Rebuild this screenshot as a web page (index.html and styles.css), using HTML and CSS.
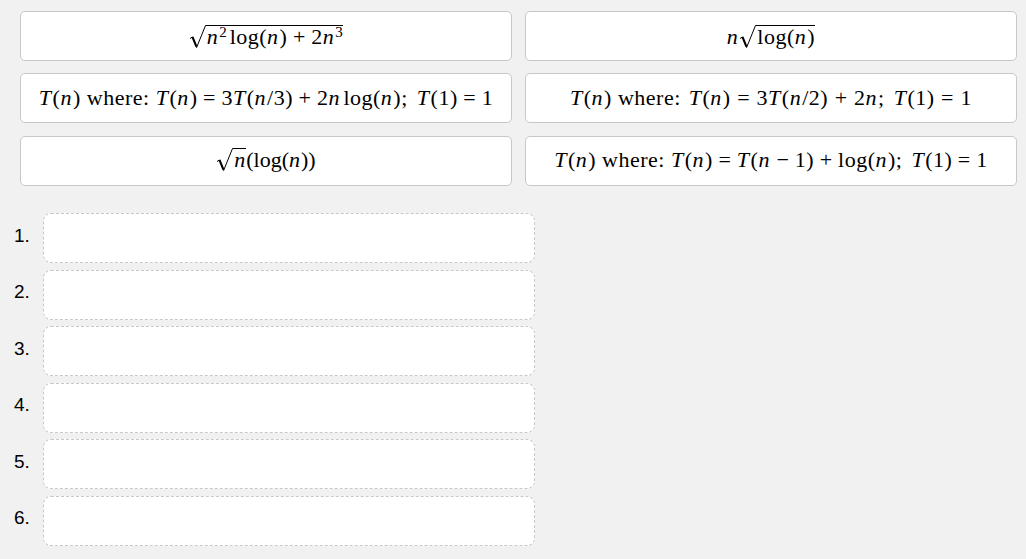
FILE: index.html
```html
<!DOCTYPE html>
<html lang="en">
    <head>
        <meta charset="utf-8">
        <title>Order the functions</title>
        <link rel="stylesheet" href="styles.css">
    </head>
    <body>
        <div class="cards">
            <div class="card first">
                <span class="math"><svg class="radical" width="18" height="24" viewBox="0 0 18 24"><path d="M1 13.5 L3.5 12 L7.6 22.5 L16.5 .5 L18 .5" fill="none" stroke="#000"/><path d="M3.5 12 L7.4 21.5" fill="none" stroke="#000" stroke-width="2"/></svg><span class="radicand"><i>n</i><sup>2</sup><span class="thin"></span>log(<i>n</i>)<span class="op">+</span>2<i>n</i><sup>3</sup></span></span>
            </div>
            <div class="card first">
                <span class="math"><i>n</i><svg class="radical" width="18" height="24" viewBox="0 0 18 24"><path d="M1 13.5 L3.5 12 L7.6 22.5 L16.5 .5 L18 .5" fill="none" stroke="#000"/><path d="M3.5 12 L7.4 21.5" fill="none" stroke="#000" stroke-width="2"/></svg><span class="radicand">log(<i>n</i>)</span></span>
            </div>
            <div class="card">
                <span class="math"><i>T</i>(<i>n</i>) where: <i>T</i>(<i>n</i>)<span class="op">=</span>3<i>T</i>(<i>n</i>/3)<span class="op">+</span>2<i>n</i><span class="thin"></span>log(<i>n</i>);<span class="semi"></span><i>T</i>(1)<span class="op">=</span>1</span>
            </div>
            <div class="card">
                <span class="math loose"><i>T</i>(<i>n</i>) where:<span class="semi wide"></span><i>T</i>(<i>n</i>)<span class="op">=</span>3<i>T</i>(<i>n</i>/2)<span class="op">+</span>2<i>n</i>;<span class="semi"></span><i>T</i>(1)<span class="op">=</span>1</span>
            </div>
            <div class="card">
                <span class="math tight"><svg class="radical" width="18" height="24" viewBox="0 0 18 24"><path d="M1 13.5 L3.5 12 L7.6 22.5 L16.5 .5 L18 .5" fill="none" stroke="#000"/><path d="M3.5 12 L7.4 21.5" fill="none" stroke="#000" stroke-width="2"/></svg><span class="radicand"><i>n</i></span>(log(<i>n</i>))</span>
            </div>
            <div class="card">
                <span class="math"><i>T</i>(<i>n</i>) where: <i>T</i>(<i>n</i>)<span class="op">=</span><i>T</i>(<i>n</i><span class="op">&minus;</span>1)<span class="op">+</span>log(<i>n</i>);<span class="semi"></span><i>T</i>(1)<span class="op">=</span>1</span>
            </div>
        </div>
        <ol class="slots">
            <li class="slot-row"><span class="num">1.</span><div class="slot"></div></li>
            <li class="slot-row"><span class="num">2.</span><div class="slot"></div></li>
            <li class="slot-row"><span class="num">3.</span><div class="slot"></div></li>
            <li class="slot-row"><span class="num">4.</span><div class="slot"></div></li>
            <li class="slot-row"><span class="num">5.</span><div class="slot"></div></li>
            <li class="slot-row"><span class="num">6.</span><div class="slot"></div></li>
        </ol>
    </body>
</html>
```

FILE: styles.css
```css
* {
    margin: 0;
    padding: 0;
    box-sizing: border-box;
}
html, body {
    height: 559px;
    overflow: hidden;
}
body {
    background-color: #f1f1f1;
    padding: 11px 9px 0 20px;
    font-family: "Liberation Sans", Arial, sans-serif;
    color: #000;
}
.cards {
    display: grid;
    grid-template-columns: 492px 492px;
    grid-auto-rows: 50px;
    column-gap: 13px;
    row-gap: 12.4px;
}
.card {
    display: flex;
    align-items: center;
    justify-content: center;
    background-color: #fff;
    border: 1px solid #c8c8c8;
    border-radius: 5px;
}
.first {
    padding-top: 2px;
}
.math {
    display: inline-block;
    margin-top: -1px;
    font-family: "Liberation Serif", "Times New Roman", serif;
    font-size: 22px;
    letter-spacing: 0.5px;
    line-height: 26px;
    white-space: pre;
}
.tight {
    letter-spacing: 0;
}
.math i {
    padding-right: 1px;
}
.op {
    padding: 0 5.5px;
}
.loose .op {
    padding: 0 6.5px;
}
.thin {
    display: inline-block;
    width: 2.5px;
}
.semi {
    display: inline-block;
    width: 9px;
}
.wide {
    width: 8px;
}
.radical {
    vertical-align: -5px;
}
.radicand {
    display: inline-block;
    border-top: 1px solid #000;
    line-height: 21px;
}
.radicand sup {
    font-size: 15px;
    line-height: 0;
    vertical-align: 7px;
}
.slots {
    list-style: none;
    margin: 27.3px 0 0 -6px;
    display: flex;
    flex-direction: column;
    row-gap: 6.5px;
    width: 521px;
}
.slot-row {
    display: flex;
    align-items: center;
    height: 50px;
}
.num {
    width: 29px;
    font-size: 19px;
    margin-top: -4.8px;
}
.slot {
    width: 492px;
    height: 50px;
    background-color: #fff;
    border: 1px dashed #c8c8c8;
    border-radius: 8px;
}
```
